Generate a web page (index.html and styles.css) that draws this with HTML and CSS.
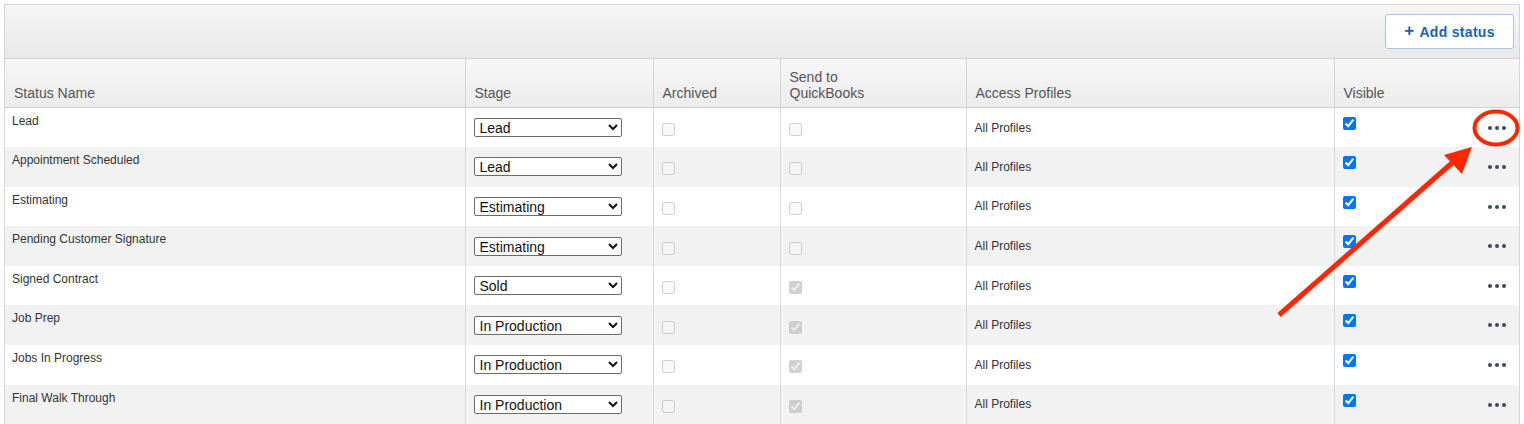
FILE: index.html
```html
<!DOCTYPE html>
<html lang="en">
<head>
<meta charset="utf-8">
<title>Statuses</title>
<link rel="stylesheet" href="styles.css">
</head>
<body>
<div class="panel">
  <div class="toolbar">
    <button class="add-btn" type="button"><span class="plus">+</span> Add status</button>
  </div>
  <table class="grid">
    <colgroup>
      <col class="c-name"><col class="c-stage"><col class="c-arch"><col class="c-qb"><col class="c-access"><col class="c-vis">
    </colgroup>
    <thead>
      <tr>
        <th>Status Name</th>
        <th>Stage</th>
        <th>Archived</th>
        <th>Send to<br>QuickBooks</th>
        <th>Access Profiles</th>
        <th>Visible</th>
      </tr>
    </thead>
    <tbody>
      <tr>
        <td class="name">Lead</td>
        <td><select class="stage"><option>Lead</option></select></td>
        <td><input type="checkbox" disabled></td>
        <td><input type="checkbox" disabled></td>
        <td>All Profiles</td>
        <td class="vis"><div class="vis-wrap"><input type="checkbox" checked><span class="dots"><i></i><i></i><i></i></span></div></td>
      </tr>
      <tr>
        <td class="name">Appointment Scheduled</td>
        <td><select class="stage"><option>Lead</option></select></td>
        <td><input type="checkbox" disabled></td>
        <td><input type="checkbox" disabled></td>
        <td>All Profiles</td>
        <td class="vis"><div class="vis-wrap"><input type="checkbox" checked><span class="dots"><i></i><i></i><i></i></span></div></td>
      </tr>
      <tr>
        <td class="name">Estimating</td>
        <td><select class="stage"><option>Estimating</option></select></td>
        <td><input type="checkbox" disabled></td>
        <td><input type="checkbox" disabled></td>
        <td>All Profiles</td>
        <td class="vis"><div class="vis-wrap"><input type="checkbox" checked><span class="dots"><i></i><i></i><i></i></span></div></td>
      </tr>
      <tr>
        <td class="name">Pending Customer Signature</td>
        <td><select class="stage"><option>Estimating</option></select></td>
        <td><input type="checkbox" disabled></td>
        <td><input type="checkbox" disabled></td>
        <td>All Profiles</td>
        <td class="vis"><div class="vis-wrap"><input type="checkbox" checked><span class="dots"><i></i><i></i><i></i></span></div></td>
      </tr>
      <tr>
        <td class="name">Signed Contract</td>
        <td><select class="stage"><option>Sold</option></select></td>
        <td><input type="checkbox" disabled></td>
        <td><input type="checkbox" disabled checked></td>
        <td>All Profiles</td>
        <td class="vis"><div class="vis-wrap"><input type="checkbox" checked><span class="dots"><i></i><i></i><i></i></span></div></td>
      </tr>
      <tr>
        <td class="name">Job Prep</td>
        <td><select class="stage"><option>In Production</option></select></td>
        <td><input type="checkbox" disabled></td>
        <td><input type="checkbox" disabled checked></td>
        <td>All Profiles</td>
        <td class="vis"><div class="vis-wrap"><input type="checkbox" checked><span class="dots"><i></i><i></i><i></i></span></div></td>
      </tr>
      <tr>
        <td class="name">Jobs In Progress</td>
        <td><select class="stage"><option>In Production</option></select></td>
        <td><input type="checkbox" disabled></td>
        <td><input type="checkbox" disabled checked></td>
        <td>All Profiles</td>
        <td class="vis"><div class="vis-wrap"><input type="checkbox" checked><span class="dots"><i></i><i></i><i></i></span></div></td>
      </tr>
      <tr>
        <td class="name">Final Walk Through</td>
        <td><select class="stage"><option>In Production</option></select></td>
        <td><input type="checkbox" disabled></td>
        <td><input type="checkbox" disabled checked></td>
        <td>All Profiles</td>
        <td class="vis"><div class="vis-wrap"><input type="checkbox" checked><span class="dots"><i></i><i></i><i></i></span></div></td>
      </tr>
    </tbody>
  </table>
</div>
<svg class="annotation" width="1524" height="424" viewBox="0 0 1524 424" aria-hidden="true">
  <ellipse cx="1496" cy="128" rx="21.5" ry="16.5" fill="none" stroke="#ff2600" stroke-width="4"/>
  <line x1="1279" y1="315" x2="1452" y2="163" stroke="#ff2600" stroke-width="5"/>
  <polygon points="1472,147 1444,155 1462,174" fill="#ff2600"/>
</svg>
</body>
</html>
```

FILE: styles.css
```css
html, body {
  margin: 0;
  padding: 0;
  background: #ffffff;
  overflow: hidden;
}
body {
  font-family: "Liberation Sans", Arial, sans-serif;
  color: #333;
  position: relative;
  width: 1524px;
  height: 424px;
}
.panel {
  margin: 4px 0 0 4px;
  width: 1516px;
  box-sizing: border-box;
  border: 1px solid #d6d6d6;
  border-bottom: none;
}
.toolbar {
  height: 54px;
  border-bottom: 1px solid #d2d2d2;
  background: linear-gradient(#f6f6f6, #e9e8e9);
  display: flex;
  justify-content: flex-end;
  align-items: flex-start;
  padding: 9px 5px 0 0;
  box-sizing: border-box;
}
.add-btn {
  width: 129px;
  height: 35px;
  background: #fff;
  border: 1px solid #a9c4e4;
  border-radius: 3px;
  color: #1d5fb6;
  font-family: "Liberation Sans", Arial, sans-serif;
  font-weight: bold;
  font-size: 14px;
  letter-spacing: 0.3px;
  padding: 0;
  display: flex;
  align-items: center;
  justify-content: center;
  gap: 5px;
}
.plus {
  font-size: 17px;
  line-height: 1;
  margin-top: -2px;
}
.grid {
  width: 1514px;
  border-collapse: collapse;
  table-layout: fixed;
}
.c-name { width: 460px; }
.c-stage { width: 188px; }
.c-arch { width: 127px; }
.c-qb { width: 186px; }
.c-access { width: 368px; }
.c-vis { width: 185px; }
.grid th {
  height: 42px;
  text-align: left;
  vertical-align: bottom;
  font-weight: normal;
  font-size: 14px;
  line-height: 16px;
  color: #555;
  padding: 0 9px 6px 9px;
  background: linear-gradient(#f6f6f6, #ececec);
  border-left: 1px solid #d6d6d6;
  border-bottom: 1px solid #cfcfcf;
}
.grid th:first-child { border-left: none; }
.grid td {
  height: 39.6px;
  padding: 0 8px;
  font-size: 12px;
  color: #333;
  vertical-align: middle;
  border-left: 1px solid #d9d9d9;
  box-sizing: border-box;
}
.grid td:first-child { border-left: none; }
.grid tbody tr:nth-child(even) td { background: #f2f2f2; }
.grid td.name {
  vertical-align: top;
  padding: 6px 7px 0;
}
.grid input[type="checkbox"] {
  margin: 4px 0 0 0;
  width: 13px;
  height: 13px;
  display: block;
}
.stage {
  width: 148px;
  height: 19px;
  font-family: "Liberation Sans", Arial, sans-serif;
  font-size: 14px;
  color: #111;
  border: 1px solid #6b6b6b;
  border-radius: 2px;
  background: #fff;
  padding: 0 0 0 1px;
  display: block;
}
.grid td.vis {
  vertical-align: top;
  padding: 9px 13px 0 8px;
}
.vis-wrap {
  display: flex;
  justify-content: space-between;
  align-items: flex-start;
}
.grid td.vis input[type="checkbox"] { margin: 0; }
.dots {
  display: flex;
  gap: 3px;
  margin-top: 9px;
}
.dots i {
  width: 4px;
  height: 4px;
  border-radius: 50%;
  background: #3c4a5e;
  display: block;
}
.annotation {
  position: absolute;
  left: 0;
  top: 0;
  pointer-events: none;
}
```
